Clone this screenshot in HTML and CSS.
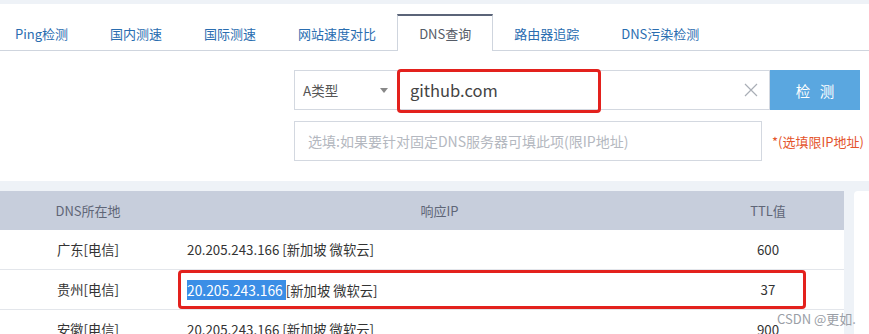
FILE: index.html
```html
<!DOCTYPE html>
<html lang="zh-CN">
<head>
  <meta charset="UTF-8" />
  <title>DNS查询</title>
  <link rel="stylesheet" href="styles.css">
</head>
<body>
  <div class="topstrip"></div>

  <div class="tabs">
    <a class="tab">Ping检测</a>
    <a class="tab">国内测速</a>
    <a class="tab">国际测速</a>
    <a class="tab">网站速度对比</a>
    <a class="tab active">DNS查询</a>
    <a class="tab">路由器追踪</a>
    <a class="tab">DNS污染检测</a>
  </div>

  <div class="form">
    <div class="row">
      <div class="select">
        <span>A类型</span>
        <span class="caret"></span>
      </div>
      <div class="host">
        <span class="value">github.com</span>
        <svg class="clear" width="14" height="14" viewBox="0 0 14 14">
          <path d="M1 1 L13 13 M13 1 L1 13" stroke="#a9aeb6" stroke-width="1.2" fill="none"/>
        </svg>
        <div class="mark host-mark"></div>
      </div>
      <button class="check">检&nbsp;&nbsp;&nbsp;测</button>
    </div>
    <div class="row second">
      <div class="server">选填:如果要针对固定DNS服务器可填此项(限IP地址)</div>
      <span class="note">*(选填限IP地址)</span>
    </div>
  </div>

  <div class="results">
    <div class="table-wrap">
      <table>
        <thead>
          <tr><th class="c1">DNS所在地</th><th class="c2">响应IP</th><th class="c3">TTL值</th></tr>
        </thead>
        <tbody>
          <tr><td class="c1">广东[电信]</td><td class="c2">20.205.243.166 [新加坡 微软云]</td><td class="c3">600</td></tr>
          <tr><td class="c1">贵州[电信]</td><td class="c2"><span class="sel">20.205.243.166 </span>[新加坡 微软云]</td><td class="c3">37</td></tr>
          <tr><td class="c1">安徽[电信]</td><td class="c2">20.205.243.166 [新加坡 微软云]</td><td class="c3">900</td></tr>
        </tbody>
      </table>
      <div class="mark row-mark"></div>
    </div>
    <div class="side"></div>
  </div>

  <div class="watermark">CSDN @更如.</div>
</body>
</html>
```

FILE: styles.css
```css
body {
  margin: 0;
  width: 869px;
  height: 334px;
  overflow: hidden;
  position: relative;
  background: #fff;
  font-family: "Noto Sans CJK SC", "Liberation Sans", sans-serif;
  font-size: 13px;
  color: #333;
}

.topstrip { height: 4px; background: #eef2f7; }

.tabs {
  display: flex;
  height: 45px;
  padding-top: 1px;
  border-bottom: 1px solid #cfd5de;
  box-sizing: content-box;
  align-items: flex-end;
}
.tab {
  display: flex;
  align-items: center;
  height: 36px;
  padding: 0 21px;
  color: #2a6db0;
  box-sizing: border-box;
  position: relative;
  top: 1px;
  line-height: 1;
  font-size: 13px;
}
.tab:first-child { padding-left: 15px; }
.tab.active {
  color: #555b66;
  background: #fff;
  border-top: 2px solid #5b6478;
  border-left: 1px solid #cfd5de;
  border-right: 1px solid #cfd5de;
  padding: 0 21px;
  height: 37px;
}

.form { height: 130px; padding-left: 294px; box-sizing: border-box; padding-top: 19px; }
.row { display: flex; align-items: center; }
.row.second { margin-top: 11px; }

.select {
  width: 103px;
  height: 40px;
  border: 1px solid #d3d8e0;
  border-right: none;
  box-sizing: border-box;
  display: flex;
  align-items: center;
  justify-content: space-between;
  padding: 0 9px 0 8px;
  color: #555;
  font-size: 13.5px;
}
.caret {
  width: 0; height: 0;
  border-left: 4px solid transparent;
  border-right: 4px solid transparent;
  border-top: 5px solid #888;
}

.host {
  position: relative;
  width: 373px;
  height: 40px;
  border: 1px solid #d3d8e0;
  box-sizing: border-box;
  display: flex;
  align-items: center;
  justify-content: space-between;
  padding: 0 11px 0 12px;
}
.host .value { font-size: 16.5px; color: #444; }

.mark {
  position: absolute;
  border: 3px solid #e3211d;
  border-radius: 4px;
  box-sizing: border-box;
}
.host-mark { left: -1px; top: -2px; width: 204px; height: 44px; }

.check {
  width: 90px;
  height: 40px;
  border: none;
  background: #5aa7e0;
  color: #fff;
  font-family: inherit;
  font-size: 14.5px;
  padding: 0;
}

.server {
  width: 468px;
  height: 40px;
  border: 1px solid #d3d8e0;
  box-sizing: border-box;
  display: flex;
  align-items: center;
  padding-left: 13px;
  color: #b4b8c0;
  font-size: 14px;
}
.note { margin-left: 10px; color: #e4542c; font-size: 13px; white-space: nowrap; }

.results {
  background: #eef2f7;
  padding-top: 10px;
  display: flex;
  gap: 10px;
  height: 154px;
  box-sizing: border-box;
}
.table-wrap { position: relative; width: 844px; background: #fff; }
.side { flex: 1; background: #fff; border-top-left-radius: 4px; }

table { width: 100%; border-collapse: collapse; }
th {
  height: 39px;
  background: #c7cedc;
  color: #5f6677;
  font-weight: normal;
  padding: 0;
}
td {
  height: 39px;
  border-bottom: 1px solid #e3e6eb;
  padding: 0;
  color: #333;
  font-size: 13.3px;
}
.c1 { width: 176px; text-align: center; }
.c2 { text-align: left; padding-left: 11px; }
th.c2 { text-align: center; }
.c3 { width: 152px; text-align: center; }

.sel { background: #3b8ee6; color: #fff; font-size: 13.8px; }

.row-mark { left: 178px; top: 79px; width: 628px; height: 39px; }

.watermark {
  position: absolute;
  left: 777px;
  top: 309px;
  color: #9a9ea6;
  font-size: 13px;
}
```
